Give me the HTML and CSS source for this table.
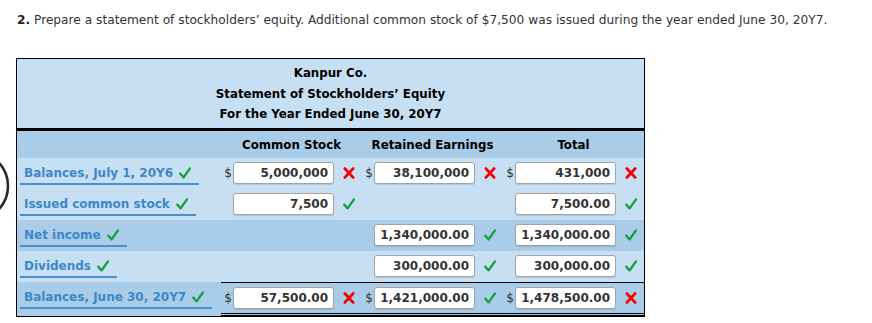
FILE: index.html
```html
<!DOCTYPE html>
<html>
<head>
<meta charset="utf-8">
<link rel="stylesheet" href="styles.css">
</head>
<body>
<svg class="arc" width="12" height="60" viewBox="0 0 12 60"><circle cx="-26" cy="30" r="34" fill="none" stroke="#2a2a2a" stroke-width="2.6"/></svg>
<div class="page">
  <p class="prompt"><b>2.</b> Prepare a statement of stockholders’ equity. Additional common stock of $7,500 was issued during the year ended June 30, 20Y7.</p>
  <div class="stmt">
    <div class="title">
      <div>Kanpur Co.</div>
      <div>Statement of Stockholders’ Equity</div>
      <div>For the Year Ended June 30, 20Y7</div>
    </div>
    <div class="row head">
      <div class="lab"></div>
      <div class="colh">Common Stock</div>
      <div class="colh">Retained Earnings</div>
      <div class="colh">Total</div>
    </div>

    <div class="row light">
      <div class="lab"><span class="ul">Balances, July 1, 20Y6 <svg class="ck" viewBox="0 0 12 12"><path d="M1.2 6.6 L4.6 10.4 L11 1.4"/></svg></span></div>
      <div class="amt"><span class="cur">$</span><span class="inp">5,000,000</span><span class="mk"><svg class="xx" viewBox="0 0 12 12"><path d="M1.8 1.5 L10.2 10.5 M10.2 1.5 L1.8 10.5"/></svg></span></div>
      <div class="amt"><span class="cur">$</span><span class="inp">38,100,000</span><span class="mk"><svg class="xx" viewBox="0 0 12 12"><path d="M1.8 1.5 L10.2 10.5 M10.2 1.5 L1.8 10.5"/></svg></span></div>
      <div class="amt"><span class="cur">$</span><span class="inp">431,000</span><span class="mk"><svg class="xx" viewBox="0 0 12 12"><path d="M1.8 1.5 L10.2 10.5 M10.2 1.5 L1.8 10.5"/></svg></span></div>
    </div>

    <div class="row light">
      <div class="lab"><span class="ul">Issued common stock <svg class="ck" viewBox="0 0 12 12"><path d="M1.2 6.6 L4.6 10.4 L11 1.4"/></svg></span></div>
      <div class="amt"><span class="cur"></span><span class="inp">7,500</span><span class="mk"><svg class="ck" viewBox="0 0 12 12"><path d="M1.2 6.6 L4.6 10.4 L11 1.4"/></svg></span></div>
      <div class="amt"></div>
      <div class="amt"><span class="cur"></span><span class="inp">7,500.00</span><span class="mk"><svg class="ck" viewBox="0 0 12 12"><path d="M1.2 6.6 L4.6 10.4 L11 1.4"/></svg></span></div>
    </div>

    <div class="row dark">
      <div class="lab"><span class="ul">Net income <svg class="ck" viewBox="0 0 12 12"><path d="M1.2 6.6 L4.6 10.4 L11 1.4"/></svg></span></div>
      <div class="amt"></div>
      <div class="amt"><span class="cur"></span><span class="inp">1,340,000.00</span><span class="mk"><svg class="ck" viewBox="0 0 12 12"><path d="M1.2 6.6 L4.6 10.4 L11 1.4"/></svg></span></div>
      <div class="amt"><span class="cur"></span><span class="inp">1,340,000.00</span><span class="mk"><svg class="ck" viewBox="0 0 12 12"><path d="M1.2 6.6 L4.6 10.4 L11 1.4"/></svg></span></div>
    </div>

    <div class="row light">
      <div class="lab"><span class="ul">Dividends <svg class="ck" viewBox="0 0 12 12"><path d="M1.2 6.6 L4.6 10.4 L11 1.4"/></svg></span></div>
      <div class="amt"></div>
      <div class="amt"><span class="cur"></span><span class="inp">300,000.00</span><span class="mk"><svg class="ck" viewBox="0 0 12 12"><path d="M1.2 6.6 L4.6 10.4 L11 1.4"/></svg></span></div>
      <div class="amt"><span class="cur"></span><span class="inp">300,000.00</span><span class="mk"><svg class="ck" viewBox="0 0 12 12"><path d="M1.2 6.6 L4.6 10.4 L11 1.4"/></svg></span></div>
    </div>

    <div class="row dark total">
      <div class="lab"><span class="ul">Balances, June 30, 20Y7 <svg class="ck" viewBox="0 0 12 12"><path d="M1.2 6.6 L4.6 10.4 L11 1.4"/></svg></span></div>
      <div class="amt"><span class="cur">$</span><span class="inp">57,500.00</span><span class="mk"><svg class="xx" viewBox="0 0 12 12"><path d="M1.8 1.5 L10.2 10.5 M10.2 1.5 L1.8 10.5"/></svg></span></div>
      <div class="amt"><span class="cur">$</span><span class="inp">1,421,000.00</span><span class="mk"><svg class="ck" viewBox="0 0 12 12"><path d="M1.2 6.6 L4.6 10.4 L11 1.4"/></svg></span></div>
      <div class="amt"><span class="cur">$</span><span class="inp">1,478,500.00</span><span class="mk"><svg class="xx" viewBox="0 0 12 12"><path d="M1.8 1.5 L10.2 10.5 M10.2 1.5 L1.8 10.5"/></svg></span></div>
    </div>
  </div>
</div>
</body>
</html>
```

FILE: styles.css
```css
html, body {
  margin: 0;
  padding: 0;
  background: #fff;
}
body {
  font-family: "DejaVu Sans", Verdana, sans-serif;
  color: #333;
  position: relative;
}
.arc {
  position: absolute;
  left: 0;
  top: 156px;
}
.page {
  padding: 12px 0 0 17px;
}
.prompt {
  margin: 0;
  font-size: 12.2px;
  line-height: 16px;
}
.prompt b {
  color: #222;
}
.stmt {
  margin-top: 30px;
  margin-left: -1px;
  width: 627px;
  border: 1px solid #000;
  background: #c7dff3;
}
.title {
  padding: 4px 0 3px;
  line-height: 20.5px;
  font-size: 11.8px;
  font-weight: bold;
  color: #000;
  text-align: center;
  border-bottom: 3px solid #000;
}
.row {
  display: grid;
  grid-template-columns: 204px repeat(3, 141px);
  height: 31px;
}
.row.head {
  height: 27px;
  background: #a9cde8;
}
.row.light { background: #c7dff3; }
.row.dark { background: #a9cde8; }
.row.total { height: 34px; }
.colh {
  display: flex;
  align-items: center;
  justify-content: center;
  font-size: 11.8px;
  font-weight: bold;
  color: #000;
  padding-top: 1px;
}
.lab {
  display: flex;
  align-items: flex-end;
  padding: 0 0 4px 3px;
}
.total .lab { padding-bottom: 7px; }
.ul {
  display: inline-flex;
  align-items: center;
  gap: 6px;
  padding: 0 8px 3px 4px;
  border-bottom: 2px solid #4a90cf;
  font-size: 12px;
  line-height: 14px;
  font-weight: bold;
  color: #3b87c8;
}
.amt {
  display: grid;
  grid-template-columns: 12px 101px 28px;
  align-items: center;
}
.total .amt {
  border-top: 1px solid #000;
  border-bottom: 3px double #000;
}
.cur {
  font-size: 12px;
  color: #333;
  text-align: right;
  padding-right: 1px;
}
.inp {
  box-sizing: border-box;
  height: 22px;
  background: #fff;
  border: 1px solid #a3a3a3;
  border-radius: 3px;
  box-shadow: 0 1px 1px rgba(0,0,0,0.12);
  text-align: right;
  padding: 0 5px 0 4px;
  font-size: 12px;
  line-height: 20px;
  font-weight: bold;
  color: #333;
}
.mk {
  display: flex;
  align-items: center;
  padding-left: 9px;
}
.ck, .xx {
  width: 12px;
  height: 12px;
  fill: none;
  stroke-linecap: round;
  stroke-linejoin: round;
}
.ck path { stroke: #12a03a; stroke-width: 2.3; }
.xx path { stroke: #f50000; stroke-width: 2.6; }
```
